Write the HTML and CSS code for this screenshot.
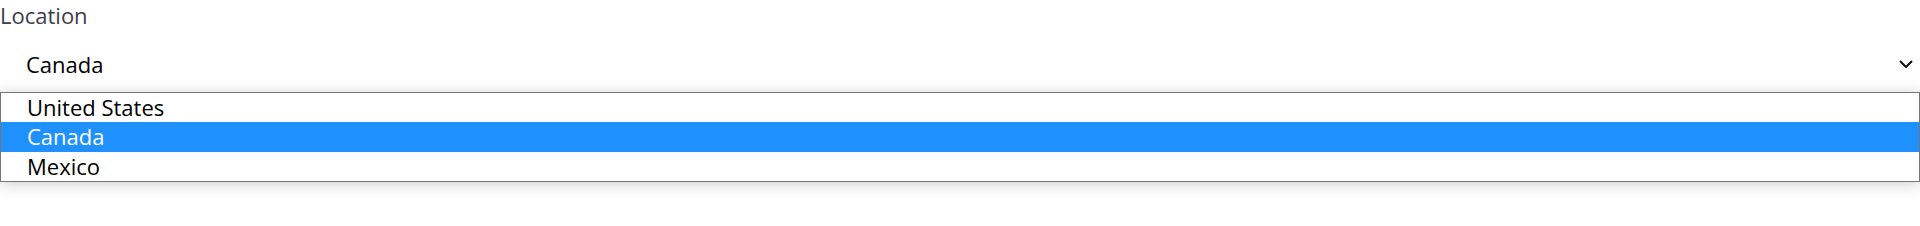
FILE: index.html
```html
<!DOCTYPE html>
<html lang="en">

<head>
    <meta charset="UTF-8">
    <meta name="viewport" content="width=device-width, initial-scale=1.0">
    <title>Location</title>
    <link rel="stylesheet" href="styles.css">
</head>

<body>
    <main class="field">
        <div class="field__label">Location</div>
        <div class="select">
            <span class="select__value">Canada</span>
            <svg class="select__arrow" width="14" height="8" viewBox="0 0 14 8">
                <polyline points="1,1 7,7 13,1" fill="none" stroke="#111" stroke-width="2"/>
            </svg>
        </div>
        <ul class="select__list">
            <li class="select__option">United States</li>
            <li class="select__option is-selected">Canada</li>
            <li class="select__option">Mexico</li>
        </ul>
    </main>
</body>

</html>
```

FILE: styles.css
```css
* {
    margin: 0;
    padding: 0;
    box-sizing: border-box;
}

body {
    width: 100%;
    height: 100vh;
    overflow: hidden;
    background-color: #fff;
    font-family: "Open Sans", "Noto Sans", sans-serif;
    font-size: 22px;
    color: #000;
}

/* label */
.field__label {
    line-height: 30px;
    color: #3c3c4a;
}

/* closed select */
.select {
    display: flex;
    align-items: center;
    justify-content: space-between;
    padding: 19px 7px 13px 26px;
    line-height: 30px;
}

.select__arrow {
    display: block;
}

/* open popup */
.select__list {
    list-style: none;
    border: 1px solid #767676;
    background-color: #fff;
    box-shadow: 0 2px 14px rgba(0, 0, 0, 0.2);
}

.select__option {
    height: 29.3px;
    line-height: 28px;
    padding-left: 26px;
}

.select__option.is-selected {
    background-color: #1e90ff;
    color: #fff;
}
```
